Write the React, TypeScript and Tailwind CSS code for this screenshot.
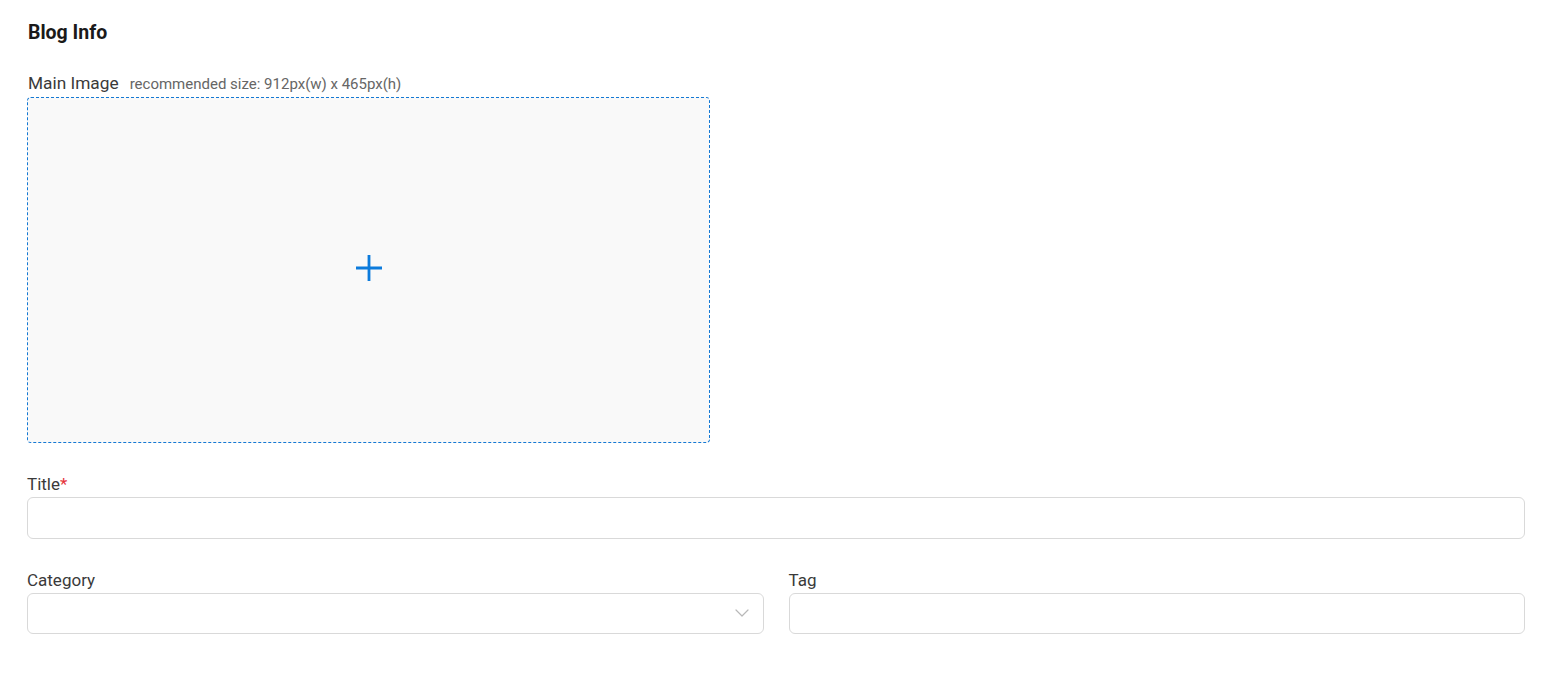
import { ChevronDown } from "lucide-react";

/* ─────────────────────────────────────────────
   FIELD LABEL
───────────────────────────────────────────── */
function Label({ children, required }: { children: React.ReactNode; required?: boolean }) {
  return (
    <label className="block text-[17px] leading-6 text-[#3a3a3a] mb-[1px]">
      {children}
      {required && <span className="text-[#e5333a]">*</span>}
    </label>
  );
}

/* ─────────────────────────────────────────────
   IMAGE DROPZONE
───────────────────────────────────────────── */
function ImageDrop() {
  return (
    <div>
      <div className="flex items-baseline gap-[11px] mb-[1px] pl-[1px]">
        <span className="text-[17.3px] leading-6 text-[#3a3a3a]">Main Image</span>
        <span className="text-[15px] text-[#666666]">recommended size: 912px(w) x 465px(h)</span>
      </div>
      <button
        type="button"
        className="w-[683px] h-[346px] flex items-center justify-center rounded-[4px] border border-dashed border-[#1479d4] bg-[#f9f9f9]"
      >
        <svg width="28" height="28" viewBox="0 0 28 28" className="text-[#0c7bdc] mt-[-4px]">
          <path d="M14 1v26M1 14h26" stroke="currentColor" strokeWidth="2.8" fill="none" />
        </svg>
      </button>
    </div>
  );
}

/* ─────────────────────────────────────────────
   PAGE
───────────────────────────────────────────── */
export default function App() {
  return (
    <main className="min-h-screen bg-white px-[27px] pt-[19px] font-['Roboto',sans-serif]">
      <h2 className="text-[19.5px] leading-[27px] font-bold text-[#1a1a1a] pl-[1px]">Blog Info</h2>

      <div className="mt-[25px]">
        <ImageDrop />
      </div>

      <div className="mt-[29px]">
        <Label required>Title</Label>
        <input
          type="text"
          className="block w-full h-[42px] rounded-[6px] border border-[#d9d9d9] px-3 text-sm outline-none"
        />
      </div>

      <div className="mt-[29px] grid grid-cols-2 gap-[25px]">
        <div>
          <Label>Category</Label>
          <div className="relative h-[41px] rounded-[6px] border border-[#d9d9d9] mt-[1px]">
            <ChevronDown
              size={24}
              strokeWidth={1.2}
              className="absolute right-[9px] top-1/2 -translate-y-1/2 text-[#b8b8b8]"
            />
          </div>
        </div>
        <div>
          <Label>Tag</Label>
          <input
            type="text"
            className="block w-full h-[41px] mt-[1px] rounded-[6px] border border-[#d9d9d9] px-3 text-sm outline-none"
          />
        </div>
      </div>
    </main>
  );
}
